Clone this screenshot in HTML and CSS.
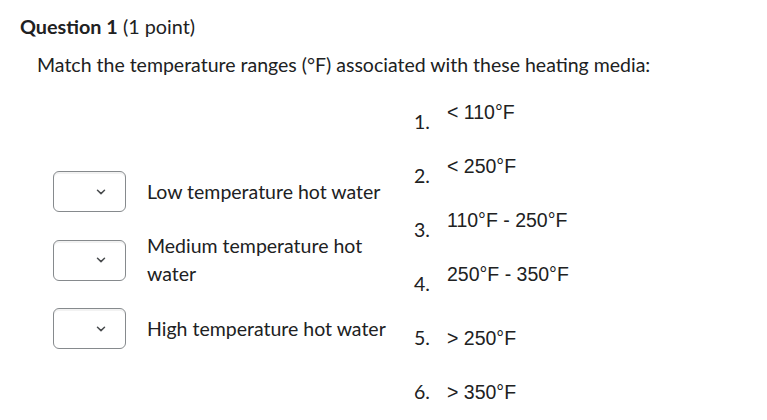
FILE: index.html
```html
<!DOCTYPE html>
<html lang="en">
<head>
<meta charset="utf-8">
<title>Question 1</title>
<link rel="stylesheet" href="styles.css">
</head>
<body>
<section class="question">
  <h2 class="q-title"><strong>Question 1</strong> <span class="q-points">(1 point)</span></h2>
  <p class="q-prompt">Match the temperature ranges (°F) associated with these heating media:</p>

  <div class="match">
    <div class="match-left">
      <div class="match-row">
        <button class="select" type="button" aria-label="Choose a match">
          <svg class="chev" width="10" height="6" viewBox="0 0 10 6"><path d="M1.5 1.2 5 4.6 8.5 1.2" fill="none" stroke="#494c4e" stroke-width="1.5" stroke-linecap="round" stroke-linejoin="round"/></svg>
        </button>
        <span class="match-label">Low temperature hot water</span>
      </div>
      <div class="match-row">
        <button class="select" type="button" aria-label="Choose a match">
          <svg class="chev" width="10" height="6" viewBox="0 0 10 6"><path d="M1.5 1.2 5 4.6 8.5 1.2" fill="none" stroke="#494c4e" stroke-width="1.5" stroke-linecap="round" stroke-linejoin="round"/></svg>
        </button>
        <span class="match-label">Medium temperature hot water</span>
      </div>
      <div class="match-row">
        <button class="select" type="button" aria-label="Choose a match">
          <svg class="chev" width="10" height="6" viewBox="0 0 10 6"><path d="M1.5 1.2 5 4.6 8.5 1.2" fill="none" stroke="#494c4e" stroke-width="1.5" stroke-linecap="round" stroke-linejoin="round"/></svg>
        </button>
        <span class="match-label">High temperature hot water</span>
      </div>
    </div>

    <ol class="choices">
      <li class="choice"><span class="num">1.</span><span class="opt opt-up">&lt; 110°F</span></li>
      <li class="choice"><span class="num">2.</span><span class="opt opt-up">&lt; 250°F</span></li>
      <li class="choice"><span class="num">3.</span><span class="opt opt-up">110°F - 250°F</span></li>
      <li class="choice"><span class="num">4.</span><span class="opt opt-up">250°F - 350°F</span></li>
      <li class="choice"><span class="num">5.</span><span class="opt">&gt; 250°F</span></li>
      <li class="choice"><span class="num">6.</span><span class="opt">&gt; 350°F</span></li>
    </ol>
  </div>
</section>
</body>
</html>
```

FILE: styles.css
```css
html, body {
  margin: 0;
  padding: 0;
  background: #ffffff;
}

body {
  font-family: Lato, "Noto Sans", sans-serif;
  color: #202122;
}

.question {
  padding: 14px 20px 0 20px;
}

.q-title {
  margin: 0;
  font-size: 19.8px;
  line-height: 24px;
  font-weight: 400;
}

.q-title strong {
  font-weight: 700;
}

.q-prompt {
  margin: 13px 0 0 17px;
  font-size: 19.5px;
  line-height: 28px;
}

.match {
  display: flex;
  align-items: flex-start;
}

.match-left {
  display: flex;
  flex-direction: column;
  gap: 20px;
  flex: none;
  width: 361px;
  margin-left: 33px;
  margin-top: 92px;
}

.match-row {
  display: flex;
  align-items: center;
}

.select {
  flex: none;
  width: 73px;
  height: 41px;
  box-sizing: border-box;
  border: 1px solid #868a8d;
  border-radius: 6px;
  background: #ffffff;
  padding: 0 19px 0 0;
  display: flex;
  align-items: center;
  justify-content: flex-end;
  box-shadow: inset 0 2px 0 rgba(0, 0, 0, 0.05);
}

.chev {
  display: block;
}

.match-label {
  margin-left: 21px;
  width: 245px;
  font-size: 19.5px;
  line-height: 28px;
}

.choices {
  list-style: none;
  margin: 0;
  padding: 0;
}

.choice {
  display: flex;
  align-items: flex-end;
  height: 54px;
  white-space: nowrap;
}

.num {
  flex: none;
  width: 33px;
  font-size: 19.5px;
  line-height: 22px;
}

.opt {
  font-family: "Liberation Sans", Arial, sans-serif;
  font-size: 19.5px;
  line-height: 22px;
}

.opt-up {
  padding-bottom: 10px;
}
```
